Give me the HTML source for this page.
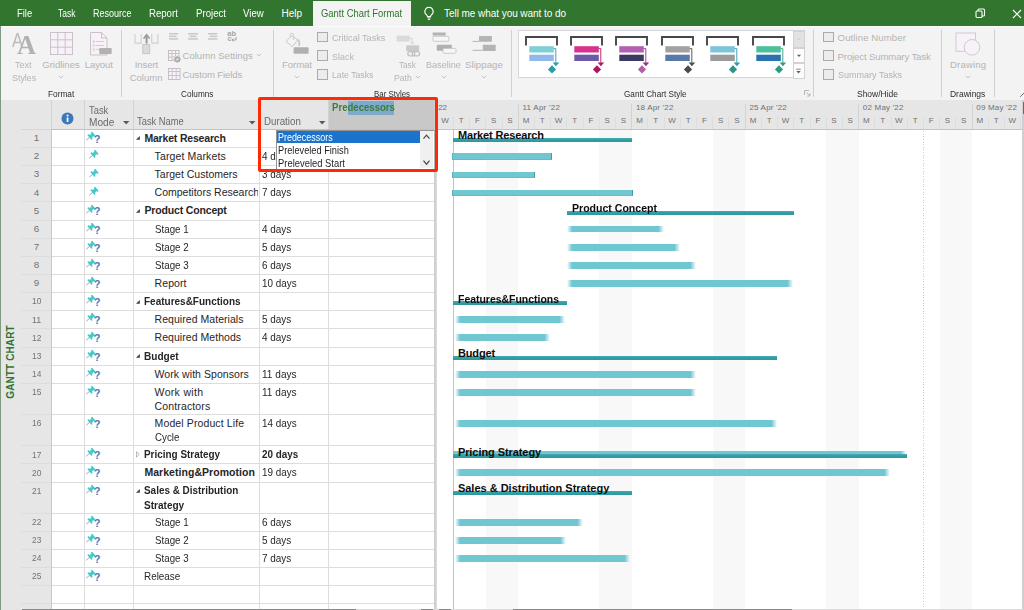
<!DOCTYPE html>
<html><head><meta charset="utf-8"><title>Gantt Chart</title>
<style>
html,body{margin:0;padding:0;}
body{width:1024px;height:610px;position:relative;overflow:hidden;background:#fff;font-family:"Liberation Sans",sans-serif;}
.t{position:absolute;white-space:nowrap;margin:0;padding:0;}
.b{position:absolute;box-sizing:border-box;overflow:visible;}
</style></head><body>
<div class="b" style="left:0.00px;top:0.00px;width:1024.00px;height:26.00px;background:#31752f;"></div>
<div class="b" style="left:0.00px;top:26.00px;width:1024.00px;height:74.40px;background:#f3f3f3;"></div>
<div class="b" style="left:0.00px;top:26.00px;width:1024.00px;height:1.00px;background:#fbfbfb;"></div>
<div class="b" style="left:0.00px;top:99.60px;width:1024.00px;height:0.80px;background:#e0e0e0;"></div>
<div class="b" style="left:0.00px;top:26.00px;width:1.00px;height:584.00px;background:#7f9a80;"></div>
<div class="t" style="left:16.50px;top:7.54px;font-size:10px;line-height:12px;color:#fff;transform:scaleX(0.9434);transform-origin:0 0;">File</div>
<div class="t" style="left:57.90px;top:7.54px;font-size:10px;line-height:12px;color:#fff;transform:scaleX(0.8511);transform-origin:0 0;">Task</div>
<div class="t" style="left:92.70px;top:7.54px;font-size:10px;line-height:12px;color:#fff;transform:scaleX(0.9020);transform-origin:0 0;">Resource</div>
<div class="t" style="left:149.00px;top:7.54px;font-size:10px;line-height:12px;color:#fff;transform:scaleX(0.9596);transform-origin:0 0;">Report</div>
<div class="t" style="left:195.50px;top:7.54px;font-size:10px;line-height:12px;color:#fff;transform:scaleX(0.9640);transform-origin:0 0;">Project</div>
<div class="t" style="left:243.30px;top:7.54px;font-size:10px;line-height:12px;color:#fff;transform:scaleX(0.9631);transform-origin:0 0;">View</div>
<div class="t" style="left:281.60px;top:7.54px;font-size:10px;line-height:12px;color:#fff;letter-spacing:-0.066px;">Help</div>
<div class="b" style="left:313.30px;top:1.20px;width:97.80px;height:25.30px;background:#f3f3f3;"></div>
<div class="t" style="left:321.00px;top:7.54px;font-size:10px;line-height:12px;color:#31752f;transform:scaleX(0.9427);transform-origin:0 0;">Gantt Chart Format</div>
<div class="t" style="left:444.00px;top:7.54px;font-size:10px;line-height:12px;color:#fff;letter-spacing:-0.052px;">Tell me what you want to do</div>
<svg class="b" style="left:422.00px;top:6.00px" width="14" height="15" viewBox="0 0 14 15"><path d="M7 1.2a4.2 4.2 0 0 0-2.4 7.6c.5.5.8 1 .8 1.7h3.2c0-.7.3-1.2.8-1.7A4.2 4.2 0 0 0 7 1.2z" fill="none" stroke="#fff" stroke-width="1.1"/><path d="M5.4 11.8h3.2M5.8 13.3h2.4" stroke="#fff" stroke-width="1"/></svg>
<svg class="b" style="left:975.00px;top:8.00px" width="11" height="11" viewBox="0 0 11 11"><rect x="1" y="3" width="6" height="6.5" rx="1" fill="none" stroke="#fff" stroke-width="1.1"/><path d="M3 3V2a1 1 0 0 1 1-1h4.5a1 1 0 0 1 1 1v5a1 1 0 0 1-1 1H7" fill="none" stroke="#fff" stroke-width="1.1"/></svg>
<svg class="b" style="left:1012.00px;top:9.00px" width="10" height="10" viewBox="0 0 10 10"><path d="M1 1l8 8M9 1l-8 8" stroke="#fff" stroke-width="1.1"/></svg>
<div class="b" style="left:120.80px;top:29.50px;width:1.00px;height:67.00px;background:#cfcfcf;"></div>
<div class="b" style="left:272.90px;top:29.50px;width:1.00px;height:67.00px;background:#cfcfcf;"></div>
<div class="b" style="left:510.50px;top:29.50px;width:1.00px;height:67.00px;background:#cfcfcf;"></div>
<div class="b" style="left:813.20px;top:29.50px;width:1.00px;height:67.00px;background:#cfcfcf;"></div>
<div class="b" style="left:941.30px;top:29.50px;width:1.00px;height:67.00px;background:#cfcfcf;"></div>
<div class="b" style="left:993.80px;top:29.50px;width:1.00px;height:67.00px;background:#cfcfcf;"></div>
<div class="t" style="left:47.60px;top:88.85px;font-size:8.8px;line-height:11px;color:#2e2e2e;transform:scaleX(0.9437);transform-origin:0 0;">Format</div>
<div class="t" style="left:181.00px;top:88.85px;font-size:8.8px;line-height:11px;color:#2e2e2e;transform:scaleX(0.9331);transform-origin:0 0;">Columns</div>
<div class="t" style="left:374.00px;top:88.85px;font-size:8.8px;line-height:11px;color:#2e2e2e;transform:scaleX(0.8977);transform-origin:0 0;">Bar Styles</div>
<div class="t" style="left:624.40px;top:88.85px;font-size:8.8px;line-height:11px;color:#2e2e2e;transform:scaleX(0.9275);transform-origin:0 0;">Gantt Chart Style</div>
<div class="t" style="left:856.50px;top:88.85px;font-size:8.8px;line-height:11px;color:#2e2e2e;transform:scaleX(0.9635);transform-origin:0 0;">Show/Hide</div>
<div class="t" style="left:950.30px;top:88.85px;font-size:8.8px;line-height:11px;color:#2e2e2e;transform:scaleX(0.9625);transform-origin:0 0;">Drawings</div>
<div class="t" style="left:12.4px;top:30.3px;font-size:20.5px;line-height:20px;color:#bcbcbc;transform:scaleX(0.8);transform-origin:0 0">A</div>
<div class="t" style="left:17px;top:32.5px;font-size:26.5px;line-height:24px;color:#b2b2b2;font-family:'Liberation Serif',serif;font-weight:bold;transform:scaleX(0.99);transform-origin:0 0">A</div>
<div class="t" style="left:15.20px;top:59.07px;font-size:9.6px;line-height:12px;color:#b4b4b4;transform:scaleX(0.9372);transform-origin:0 0;">Text</div>
<div class="t" style="left:12.00px;top:72.27px;font-size:9.6px;line-height:12px;color:#b4b4b4;transform:scaleX(0.9257);transform-origin:0 0;">Styles</div>
<svg class="b" style="left:49.50px;top:32.00px" width="23" height="23" viewBox="0 0 23 23"><rect x="0.5" y="0.5" width="22" height="22" fill="#f8f2f8" stroke="#c9c3c9"/><path d="M7.8 0.5v22M15.2 0.5v22M0.5 7.8h22M0.5 15.2h22" stroke="#c9c3c9" stroke-width="1" fill="none"/></svg>
<div class="t" style="left:42.30px;top:59.07px;font-size:9.6px;line-height:12px;color:#b4b4b4;letter-spacing:-0.053px;">Gridlines</div>
<svg class="b" style="left:58.00px;top:74.70px" width="6" height="4" viewBox="0 0 6 4"><path d="M0.8 0.8L3 3l2.2-2.2" fill="none" stroke="#bdbdbd" stroke-width="0.9"/></svg>
<svg class="b" style="left:89.50px;top:31.50px" width="23" height="24" viewBox="0 0 23 24"><path d="M0.5 0.5h11l5.5 5.5v17h-16.5z" fill="#f8f2f8" stroke="#c9c3c9"/><path d="M11.5 0.5v5.5h5.5" fill="none" stroke="#c9c3c9"/><path d="M6 9.5h8M6 13.5h8M6 17.5h4" stroke="#d4cfd4" stroke-width="1"/><circle cx="3.8" cy="9.5" r="1" fill="#c4bec4"/><circle cx="3.8" cy="13.5" r="1" fill="none" stroke="#c4bec4" stroke-width=".6"/><circle cx="3.8" cy="17.5" r="1" fill="none" stroke="#c4bec4" stroke-width=".6"/><rect x="9.2" y="15.9" width="12.5" height="6.2" rx="0.8" fill="#b2b2b2"/></svg>
<div class="t" style="left:84.80px;top:59.07px;font-size:9.6px;line-height:12px;color:#b4b4b4;letter-spacing:-0.154px;">Layout</div>
<svg class="b" style="left:134.00px;top:33.00px" width="25" height="22" viewBox="0 0 25 22"><path d="M1 0.9v9.2h6.2v-9.2M17.7 0.9v9.2h6.2v-9.2" fill="#f5f1f5" stroke="#cfcfcf" stroke-width="1.1"/><path d="M12.6 10.6V3.5" fill="none" stroke="#999" stroke-width="2"/><path d="M8.9 5.2L12.6 0.6l3.7 4.6-1.2.9-2.5-2.6-2.5 2.6z" fill="#999"/><rect x="8.8" y="11.6" width="6.9" height="9" fill="#dbdbdb" stroke="#c4c4c4" stroke-width="0.9"/></svg>
<div class="t" style="left:134.80px;top:59.47px;font-size:9.6px;line-height:12px;color:#b4b4b4;letter-spacing:-0.135px;">Insert</div>
<div class="t" style="left:129.70px;top:72.27px;font-size:9.6px;line-height:12px;color:#b4b4b4;letter-spacing:-0.047px;">Column</div>
<svg class="b" style="left:169.20px;top:33.40px" width="10" height="8" viewBox="0 0 10 8"><rect x="0" y="0.0" width="9" height="1.5" fill="#c8c8c8"/><rect x="0" y="2.6" width="7.5" height="1.5" fill="#c8c8c8"/><rect x="0" y="5.2" width="9" height="1.5" fill="#c8c8c8"/></svg>
<svg class="b" style="left:188.00px;top:33.40px" width="10" height="8" viewBox="0 0 10 8"><rect x="0" y="0.0" width="10" height="1.5" fill="#c8c8c8"/><rect x="1.5" y="2.6" width="7.0" height="1.5" fill="#c8c8c8"/><rect x="0" y="5.2" width="10" height="1.5" fill="#c8c8c8"/></svg>
<svg class="b" style="left:207.80px;top:33.40px" width="10" height="8" viewBox="0 0 10 8"><rect x="0" y="0.0" width="9.4" height="1.5" fill="#c8c8c8"/><rect x="1.5" y="2.6" width="7.9" height="1.5" fill="#c8c8c8"/><rect x="0" y="5.2" width="9.4" height="1.5" fill="#c8c8c8"/></svg>
<div class="t" style="left:227.20px;top:29.17px;font-size:7.6px;line-height:10px;color:#a6a6a6;font-weight:bold;letter-spacing:-0.034px;">ab</div>
<div class="t" style="left:227.50px;top:34.17px;font-size:7.6px;line-height:10px;color:#a6a6a6;font-weight:bold;">c</div>
<svg class="b" style="left:231.40px;top:37.20px" width="6" height="5" viewBox="0 0 6 5"><path d="M5 0v3H1M2.4 1.6L1 3l1.4 1.4" fill="none" stroke="#a0a0a0" stroke-width="1"/></svg>
<svg class="b" style="left:167.50px;top:49.50px" width="13" height="13" viewBox="0 0 13 13"><rect x="0.5" y="0.5" width="10.5" height="10" fill="#f8f2f8" stroke="#c4c0c4"/><path d="M0.5 3.5h10.5M4 0.5v10M7.5 0.5v10M0.5 7h10.5" stroke="#c4c0c4" stroke-width="0.9" fill="none"/><circle cx="9.3" cy="9.3" r="3.6" fill="#f3f3f3"/><circle cx="9.3" cy="9.3" r="2.3" fill="none" stroke="#aeaeae" stroke-width="1.5"/><path d="M9.3 5.6v7.4M5.6 9.3h7.4M6.7 6.7l5.2 5.2M11.9 6.7l-5.2 5.2" stroke="#aeaeae" stroke-width="1"/><circle cx="9.3" cy="9.3" r="0.9" fill="#f3f3f3"/></svg>
<div class="t" style="left:182.50px;top:49.97px;font-size:9.6px;line-height:12px;color:#b4b4b4;letter-spacing:-0.009px;">Column Settings</div>
<svg class="b" style="left:255.80px;top:53.20px" width="6" height="4" viewBox="0 0 6 4"><path d="M0.8 0.8L3 3l2.2-2.2" fill="none" stroke="#bdbdbd" stroke-width="0.9"/></svg>
<svg class="b" style="left:167.50px;top:67.80px" width="13" height="12" viewBox="0 0 13 12"><rect x="0.5" y="0.5" width="11.5" height="11" fill="#f8f2f8" stroke="#c4c0c4"/><path d="M0.5 3.5h11.5M4.2 0.5v11M8.2 0.5v11M0.5 7.5h11.5" stroke="#c4c0c4" stroke-width="0.9" fill="none"/></svg>
<div class="t" style="left:182.50px;top:69.47px;font-size:9.6px;line-height:12px;color:#b4b4b4;letter-spacing:-0.127px;">Custom Fields</div>
<svg class="b" style="left:285.00px;top:32.00px" width="24" height="23" viewBox="0 0 24 23"><path d="M6.8 3.9L12.8 7.8 7.3 14.6 1 9.4z" fill="#f6f4f6" stroke="#c9c9c9" stroke-width="1"/><path d="M5.2 5V2.9a1.7 1.7 0 0 1 3.4 0V6.4" fill="none" stroke="#c9c9c9" stroke-width="0.9"/><circle cx="8.4" cy="7" r="0.7" fill="#bdbdbd"/><path d="M13 7.4c1.4 1.6 1.7 3.9 1.2 6.4" stroke="#c6c6c6" stroke-width="1.5" fill="none"/><rect x="8.6" y="15.3" width="15" height="6.4" rx="0.8" fill="#b0b0b0"/></svg>
<div class="t" style="left:282.00px;top:59.37px;font-size:9.6px;line-height:12px;color:#b4b4b4;letter-spacing:-0.084px;">Format</div>
<svg class="b" style="left:294.30px;top:74.70px" width="6" height="4" viewBox="0 0 6 4"><path d="M0.8 0.8L3 3l2.2-2.2" fill="none" stroke="#bdbdbd" stroke-width="0.9"/></svg>
<div class="b" style="left:317.00px;top:31.60px;width:10.60px;height:10.60px;background:#ececec;border:1px solid #ababab;"></div>
<div class="t" style="left:331.60px;top:31.87px;font-size:9.6px;line-height:12px;color:#b4b4b4;transform:scaleX(0.9456);transform-origin:0 0;">Critical Tasks</div>
<div class="b" style="left:317.00px;top:50.30px;width:10.60px;height:10.60px;background:#ececec;border:1px solid #ababab;"></div>
<div class="t" style="left:331.60px;top:50.57px;font-size:9.6px;line-height:12px;color:#b4b4b4;transform:scaleX(0.9329);transform-origin:0 0;">Slack</div>
<div class="b" style="left:317.00px;top:69.30px;width:10.60px;height:10.60px;background:#ececec;border:1px solid #ababab;"></div>
<div class="t" style="left:331.60px;top:69.37px;font-size:9.6px;line-height:12px;color:#b4b4b4;transform:scaleX(0.9056);transform-origin:0 0;">Late Tasks</div>
<svg class="b" style="left:396.00px;top:34.50px" width="26" height="23" viewBox="0 0 26 23"><rect x="0.6" y="0.7" width="13" height="5.8" fill="#dadada"/><path d="M13.6 3.5h2.6v5" fill="none" stroke="#d0d0d0" stroke-width="0.9"/><path d="M14.6 7.4l1.6 1.8 1.6-1.8" fill="none" stroke="#d0d0d0" stroke-width="0.9"/><rect x="10.2" y="10.3" width="13" height="5.9" fill="#cacaca"/><rect x="11.8" y="16.6" width="7" height="4.2" rx="2.1" fill="none" stroke="#c0c0c0" stroke-width="1.3"/><rect x="16.2" y="16.6" width="7.4" height="4.2" rx="2.1" fill="none" stroke="#c0c0c0" stroke-width="1.3"/></svg>
<div class="t" style="left:399.40px;top:59.07px;font-size:9.6px;line-height:12px;color:#b4b4b4;transform:scaleX(0.8511);transform-origin:0 0;">Task</div>
<div class="t" style="left:394.30px;top:72.27px;font-size:9.6px;line-height:12px;color:#b4b4b4;transform:scaleX(0.8963);transform-origin:0 0;">Path</div>
<svg class="b" style="left:415.20px;top:75.20px" width="6" height="4" viewBox="0 0 6 4"><path d="M0.8 0.8L3 3l2.2-2.2" fill="none" stroke="#bdbdbd" stroke-width="0.9"/></svg>
<svg class="b" style="left:431.50px;top:32.00px" width="25" height="22" viewBox="0 0 25 22"><rect x="0.7" y="0.5" width="13" height="3.1" fill="#b4b4b4"/><rect x="0.9" y="4.3" width="16" height="5" rx="1" fill="#f8f4f8" stroke="#c6c6c6" stroke-width="0.9"/><rect x="4.8" y="12.8" width="15" height="5.9" rx="0.6" fill="#b0b0b0"/><rect x="11" y="16.4" width="13" height="4.9" rx="1" fill="#f8f4f8" stroke="#c6c6c6" stroke-width="0.9"/></svg>
<div class="t" style="left:426.00px;top:59.07px;font-size:9.6px;line-height:12px;color:#b4b4b4;transform:scaleX(0.9477);transform-origin:0 0;">Baseline</div>
<svg class="b" style="left:440.80px;top:74.70px" width="6" height="4" viewBox="0 0 6 4"><path d="M0.8 0.8L3 3l2.2-2.2" fill="none" stroke="#bdbdbd" stroke-width="0.9"/></svg>
<svg class="b" style="left:472.00px;top:35.00px" width="25" height="17" viewBox="0 0 25 17"><rect x="7" y="1" width="12.9" height="5.8" rx="0.5" fill="#b4b4b4"/><rect x="0.5" y="5.9" width="6.4" height="1" fill="#b4b4b4"/><rect x="10.8" y="9.8" width="12.9" height="6.1" rx="0.5" fill="#b4b4b4"/><rect x="0.5" y="14.8" width="10" height="1" fill="#b4b4b4"/></svg>
<div class="t" style="left:465.00px;top:59.07px;font-size:9.6px;line-height:12px;color:#b4b4b4;letter-spacing:0.067px;">Slippage</div>
<svg class="b" style="left:481.10px;top:74.70px" width="6" height="4" viewBox="0 0 6 4"><path d="M0.8 0.8L3 3l2.2-2.2" fill="none" stroke="#bdbdbd" stroke-width="0.9"/></svg>
<div class="b" style="left:518.20px;top:30.30px;width:286.80px;height:48.20px;background:#ffffff;border:1px solid #d6d6d6;"></div>
<svg class="b" style="left:524.60px;top:35.60px" width="36" height="40" viewBox="0 0 36 40"><path d="M1 9.6V1h31v8.6" fill="none" stroke="#474747" stroke-width="1.9"/><rect x="4.3" y="10.2" width="24.5" height="6.3" fill="#7fd0d6"/><rect x="4.3" y="18.7" width="24.5" height="6.3" fill="#8fb9ea"/><path d="M28.8 12.6h2v14.2" fill="none" stroke="#2a9ca8" stroke-width="0.9"/><path d="M27.6 26.4h6.6l-3.3 3.9z" fill="#2a9ca8"/><path d="M27 29.3l4.1 4.1-4.1 4.1-4.1-4.1z" fill="#2a9ca8"/></svg>
<svg class="b" style="left:570.02px;top:35.60px" width="36" height="40" viewBox="0 0 36 40"><path d="M1 9.6V1h31v8.6" fill="none" stroke="#474747" stroke-width="1.9"/><rect x="4.3" y="10.2" width="24.5" height="6.3" fill="#d8338c"/><rect x="4.3" y="18.7" width="24.5" height="6.3" fill="#6b5aa6"/><path d="M28.8 12.6h2v14.2" fill="none" stroke="#b3125e" stroke-width="0.9"/><path d="M27.6 26.4h6.6l-3.3 3.9z" fill="#b3125e"/><path d="M27 29.3l4.1 4.1-4.1 4.1-4.1-4.1z" fill="#b3125e"/></svg>
<svg class="b" style="left:615.44px;top:35.60px" width="36" height="40" viewBox="0 0 36 40"><path d="M1 9.6V1h31v8.6" fill="none" stroke="#474747" stroke-width="1.9"/><rect x="4.3" y="10.2" width="24.5" height="6.3" fill="#b35fb1"/><rect x="4.3" y="18.7" width="24.5" height="6.3" fill="#3c3a62"/><path d="M28.8 12.6h2v14.2" fill="none" stroke="#9c2a8c" stroke-width="0.9"/><path d="M27.6 26.4h6.6l-3.3 3.9z" fill="#9c2a8c"/><path d="M27 29.3l4.1 4.1-4.1 4.1-4.1-4.1z" fill="#b35fa9"/></svg>
<svg class="b" style="left:660.86px;top:35.60px" width="36" height="40" viewBox="0 0 36 40"><path d="M1 9.6V1h31v8.6" fill="none" stroke="#474747" stroke-width="1.9"/><rect x="4.3" y="10.2" width="24.5" height="6.3" fill="#a2a2a2"/><rect x="4.3" y="18.7" width="24.5" height="6.3" fill="#5a79a9"/><path d="M28.8 12.6h2v14.2" fill="none" stroke="#4a4a4a" stroke-width="0.9"/><path d="M27.6 26.4h6.6l-3.3 3.9z" fill="#4a4a4a"/><path d="M27 29.3l4.1 4.1-4.1 4.1-4.1-4.1z" fill="#4a4a4a"/></svg>
<svg class="b" style="left:706.28px;top:35.60px" width="36" height="40" viewBox="0 0 36 40"><path d="M1 9.6V1h31v8.6" fill="none" stroke="#474747" stroke-width="1.9"/><rect x="4.3" y="10.2" width="24.5" height="6.3" fill="#7cc5d9"/><rect x="4.3" y="18.7" width="24.5" height="6.3" fill="#9b9b9b"/><path d="M28.8 12.6h2v14.2" fill="none" stroke="#2a99b2" stroke-width="0.9"/><path d="M27.6 26.4h6.6l-3.3 3.9z" fill="#2a99b2"/><path d="M27 29.3l4.1 4.1-4.1 4.1-4.1-4.1z" fill="#2e9384"/></svg>
<svg class="b" style="left:751.70px;top:35.60px" width="36" height="40" viewBox="0 0 36 40"><path d="M1 9.6V1h31v8.6" fill="none" stroke="#474747" stroke-width="1.9"/><rect x="4.3" y="10.2" width="24.5" height="6.3" fill="#4cc09a"/><rect x="4.3" y="18.7" width="24.5" height="6.3" fill="#2a71b1"/><path d="M28.8 12.6h2v14.2" fill="none" stroke="#2a9a82" stroke-width="0.9"/><path d="M27.6 26.4h6.6l-3.3 3.9z" fill="#2a9a82"/><path d="M27 29.3l4.1 4.1-4.1 4.1-4.1-4.1z" fill="#2e9a82"/></svg>
<div class="b" style="left:793.00px;top:30.50px;width:12.00px;height:17.40px;background:#e2e2e2;border:1px solid #d2d2d2;"></div>
<div class="b" style="left:793.00px;top:47.80px;width:12.00px;height:15.30px;background:#fdfdfd;border:1px solid #d2d2d2;"></div>
<div class="b" style="left:793.00px;top:63.00px;width:12.00px;height:15.50px;background:#fdfdfd;border:1px solid #d2d2d2;"></div>
<svg class="b" style="left:795.90px;top:37.30px" width="6" height="4" viewBox="0 0 6 4"><path d="M1.2 2.8L3 1l1.8 1.8z" fill="#cccccc"/></svg>
<svg class="b" style="left:795.90px;top:53.80px" width="6" height="4" viewBox="0 0 6 4"><path d="M1 0.8h4L3 3z" fill="#5e5e5e"/></svg>
<svg class="b" style="left:795.40px;top:67.60px" width="7" height="7" viewBox="0 0 7 7"><path d="M1.2 1.2h4.6" stroke="#777" stroke-width="0.9"/><path d="M1.3 3h4.4L3.5 5.4z" fill="#5e5e5e"/></svg>
<svg class="b" style="left:804.20px;top:90.20px" width="7" height="7" viewBox="0 0 7 7"><path d="M0.5 5V0.5H5" fill="none" stroke="#b0b0b0" stroke-width="0.9"/><path d="M2.5 2.5L6 6M6 3.2V6H3.2" fill="none" stroke="#b0b0b0" stroke-width="0.9"/></svg>
<div class="b" style="left:823.00px;top:31.60px;width:10.80px;height:10.80px;background:#ececec;border:1px solid #ababab;"></div>
<div class="t" style="left:837.60px;top:31.87px;font-size:9.6px;line-height:12px;color:#b4b4b4;letter-spacing:0.084px;">Outline Number</div>
<div class="b" style="left:823.00px;top:50.20px;width:10.80px;height:10.80px;background:#ececec;border:1px solid #ababab;"></div>
<div class="t" style="left:837.60px;top:50.57px;font-size:9.6px;line-height:12px;color:#b4b4b4;letter-spacing:-0.142px;">Project Summary Task</div>
<div class="b" style="left:823.00px;top:69.20px;width:10.80px;height:10.80px;background:#ececec;border:1px solid #ababab;"></div>
<div class="t" style="left:837.60px;top:69.37px;font-size:9.6px;line-height:12px;color:#b4b4b4;transform:scaleX(0.9412);transform-origin:0 0;">Summary Tasks</div>
<svg class="b" style="left:955.00px;top:31.50px" width="27" height="25" viewBox="0 0 27 25"><rect x="1" y="1" width="19.5" height="18.3" fill="#f7f2f7" stroke="#cfcacf" stroke-width="1"/><circle cx="17" cy="15.3" r="7.8" fill="#f7f2f7" stroke="#cfcacf" stroke-width="1"/></svg>
<div class="t" style="left:950.00px;top:59.37px;font-size:9.6px;line-height:12px;color:#b4b4b4;letter-spacing:0.170px;">Drawing</div>
<svg class="b" style="left:965.00px;top:74.70px" width="6" height="4" viewBox="0 0 6 4"><path d="M0.8 0.8L3 3l2.2-2.2" fill="none" stroke="#bdbdbd" stroke-width="0.9"/></svg>
<svg class="b" style="left:1019.00px;top:91.00px" width="5" height="7" viewBox="0 0 5 7"><path d="M1.2 5.9L5.4 1.6" fill="none" stroke="#6e6e6e" stroke-width="1"/></svg>
<div class="b" style="left:1.00px;top:100.30px;width:50.30px;height:510.00px;background:#e6e6e6;"></div>
<div class="t" style="left:10.9px;top:361.7px;font-size:10px;line-height:12px;font-weight:bold;color:#31752f;letter-spacing:0.1px;transform:translate(-50%,-50%) rotate(-90deg);">GANTT CHART</div>
<div class="b" style="left:1.00px;top:100.30px;width:433.50px;height:29.00px;background:#e6e6e6;"></div>
<div class="b" style="left:328.60px;top:100.30px;width:106.00px;height:29.00px;background:#c8c8c8;"></div>
<div class="b" style="left:51.30px;top:129.30px;width:383.20px;height:480.70px;background:#fff;"></div>
<div class="b" style="left:20.50px;top:146.95px;width:414.00px;height:1.00px;background:#dddddd;"></div>
<div class="b" style="left:20.50px;top:165.10px;width:414.00px;height:1.00px;background:#dddddd;"></div>
<div class="b" style="left:20.50px;top:183.25px;width:414.00px;height:1.00px;background:#dddddd;"></div>
<div class="b" style="left:20.50px;top:201.40px;width:414.00px;height:1.00px;background:#dddddd;"></div>
<div class="b" style="left:20.50px;top:219.55px;width:414.00px;height:1.00px;background:#dddddd;"></div>
<div class="b" style="left:20.50px;top:237.70px;width:414.00px;height:1.00px;background:#dddddd;"></div>
<div class="b" style="left:20.50px;top:255.85px;width:414.00px;height:1.00px;background:#dddddd;"></div>
<div class="b" style="left:20.50px;top:274.00px;width:414.00px;height:1.00px;background:#dddddd;"></div>
<div class="b" style="left:20.50px;top:292.15px;width:414.00px;height:1.00px;background:#dddddd;"></div>
<div class="b" style="left:20.50px;top:310.30px;width:414.00px;height:1.00px;background:#dddddd;"></div>
<div class="b" style="left:20.50px;top:328.45px;width:414.00px;height:1.00px;background:#dddddd;"></div>
<div class="b" style="left:20.50px;top:346.60px;width:414.00px;height:1.00px;background:#dddddd;"></div>
<div class="b" style="left:20.50px;top:364.75px;width:414.00px;height:1.00px;background:#dddddd;"></div>
<div class="b" style="left:20.50px;top:382.90px;width:414.00px;height:1.00px;background:#dddddd;"></div>
<div class="b" style="left:20.50px;top:413.80px;width:414.00px;height:1.00px;background:#dddddd;"></div>
<div class="b" style="left:20.50px;top:445.20px;width:414.00px;height:1.00px;background:#dddddd;"></div>
<div class="b" style="left:20.50px;top:463.35px;width:414.00px;height:1.00px;background:#dddddd;"></div>
<div class="b" style="left:20.50px;top:481.50px;width:414.00px;height:1.00px;background:#dddddd;"></div>
<div class="b" style="left:20.50px;top:512.70px;width:414.00px;height:1.00px;background:#dddddd;"></div>
<div class="b" style="left:20.50px;top:530.85px;width:414.00px;height:1.00px;background:#dddddd;"></div>
<div class="b" style="left:20.50px;top:549.00px;width:414.00px;height:1.00px;background:#dddddd;"></div>
<div class="b" style="left:20.50px;top:567.15px;width:414.00px;height:1.00px;background:#dddddd;"></div>
<div class="b" style="left:20.50px;top:585.30px;width:414.00px;height:1.00px;background:#dddddd;"></div>
<div class="b" style="left:20.50px;top:603.45px;width:414.00px;height:1.00px;background:#dddddd;"></div>
<div class="b" style="left:83.90px;top:129.30px;width:1.00px;height:481.00px;background:#dddddd;"></div>
<div class="b" style="left:132.70px;top:129.30px;width:1.00px;height:481.00px;background:#dddddd;"></div>
<div class="b" style="left:258.70px;top:129.30px;width:1.00px;height:481.00px;background:#dddddd;"></div>
<div class="b" style="left:327.90px;top:129.30px;width:1.00px;height:481.00px;background:#dddddd;"></div>
<div class="b" style="left:50.80px;top:129.30px;width:1.00px;height:481.00px;background:#c9c9c9;"></div>
<div class="b" style="left:50.80px;top:100.30px;width:1.00px;height:29.00px;background:#d2d2d2;"></div>
<div class="b" style="left:83.90px;top:100.30px;width:1.00px;height:29.00px;background:#d2d2d2;"></div>
<div class="b" style="left:132.70px;top:100.30px;width:1.00px;height:29.00px;background:#d2d2d2;"></div>
<div class="b" style="left:258.70px;top:100.30px;width:1.00px;height:29.00px;background:#d2d2d2;"></div>
<div class="b" style="left:327.90px;top:100.30px;width:1.00px;height:29.00px;background:#d2d2d2;"></div>
<div class="b" style="left:20.50px;top:128.80px;width:30.50px;height:1.00px;background:#d6d6d6;"></div>
<div class="b" style="left:51.00px;top:128.80px;width:383.50px;height:1.00px;background:#c2c2c2;"></div>
<div class="t" style="left:88.70px;top:104.16px;font-size:10.5px;line-height:13px;color:#6a6a6a;transform:scaleX(0.8940);transform-origin:0 0;">Task</div>
<div class="t" style="left:88.70px;top:116.46px;font-size:10.5px;line-height:13px;color:#6a6a6a;transform:scaleX(0.9633);transform-origin:0 0;">Mode</div>
<div class="t" style="left:137.00px;top:114.86px;font-size:10.5px;line-height:13px;color:#6a6a6a;transform:scaleX(0.8912);transform-origin:0 0;">Task Name</div>
<div class="t" style="left:263.70px;top:114.86px;font-size:10.5px;line-height:13px;color:#6a6a6a;transform:scaleX(0.9273);transform-origin:0 0;">Duration</div>
<svg class="b" style="left:122.80px;top:120.80px" width="6.4" height="3.6" viewBox="0 0 6.4 3.6"><path d="M0 0h6.4L3.2 3.6z" fill="#5a5a5a"/></svg>
<svg class="b" style="left:248.80px;top:120.80px" width="6.4" height="3.6" viewBox="0 0 6.4 3.6"><path d="M0 0h6.4L3.2 3.6z" fill="#5a5a5a"/></svg>
<svg class="b" style="left:318.50px;top:120.80px" width="6.4" height="3.6" viewBox="0 0 6.4 3.6"><path d="M0 0h6.4L3.2 3.6z" fill="#5a5a5a"/></svg>
<svg class="b" style="left:61.30px;top:111.60px" width="13" height="13" viewBox="0 0 13 13"><circle cx="6.5" cy="6.5" r="6" fill="#3d77b8"/><rect x="5.7" y="5.4" width="1.7" height="4.6" fill="#fff"/><circle cx="6.55" cy="3.5" r="1.05" fill="#fff"/></svg>
<div class="t" style="left:33.67px;top:132.10px;font-size:9.8px;line-height:12px;color:#727272;">1</div>
<svg class="b" style="left:82.30px;top:128.90px" width="16" height="16" viewBox="-8 -8 16 16"><g transform="rotate(50) scale(0.9)"><path d="M0 0.4V5.4" stroke="#9a9ea2" stroke-width="0.95" fill="none"/><path d="M-2.5 -5.6h5a.6 .6 0 0 1 .6 .6v.8a.6 .6 0 0 1-.6 .6h-.8l.5 2.6h.7a.7 .7 0 0 1 .7 .7v.6a.6 .6 0 0 1-.6 .6h-6a.6 .6 0 0 1-.6-.6v-.6a.7 .7 0 0 1 .7-.7h.7l.5-2.6h-.8a.6 .6 0 0 1-.6-.6v-.8a.6 .6 0 0 1 .6-.6z" fill="#45c9ca"/></g></svg>
<div class="t" style="left:94.00px;top:132.76px;font-size:10.5px;line-height:13px;color:#4a79b6;font-weight:bold;">?</div>
<div class="t" style="left:144.40px;top:131.76px;font-size:10.5px;line-height:13px;color:#262626;font-weight:bold;letter-spacing:-0.183px;">Market Research</div>
<svg class="b" style="left:135.70px;top:136.20px" width="4" height="4" viewBox="0 0 4 4"><path d="M3.8 0v3.8H0z" fill="#3c3c3c"/></svg>
<div class="t" style="left:33.67px;top:150.25px;font-size:9.8px;line-height:12px;color:#727272;">2</div>
<svg class="b" style="left:84.80px;top:147.35px" width="16" height="16" viewBox="-8 -8 16 16"><g transform="rotate(50) scale(0.9)"><path d="M0 0.4V5.4" stroke="#9a9ea2" stroke-width="0.95" fill="none"/><path d="M-2.5 -5.6h5a.6 .6 0 0 1 .6 .6v.8a.6 .6 0 0 1-.6 .6h-.8l.5 2.6h.7a.7 .7 0 0 1 .7 .7v.6a.6 .6 0 0 1-.6 .6h-6a.6 .6 0 0 1-.6-.6v-.6a.7 .7 0 0 1 .7-.7h.7l.5-2.6h-.8a.6 .6 0 0 1-.6-.6v-.8a.6 .6 0 0 1 .6-.6z" fill="#45c9ca"/></g></svg>
<div class="t" style="left:154.60px;top:149.91px;font-size:10.5px;line-height:13px;color:#262626;letter-spacing:0.126px;">Target Markets</div>
<div class="t" style="left:261.80px;top:149.91px;font-size:10.5px;line-height:13px;color:#262626;transform:scaleX(0.9472);transform-origin:0 0;">4 days</div>
<div class="t" style="left:33.67px;top:168.40px;font-size:9.8px;line-height:12px;color:#727272;">3</div>
<svg class="b" style="left:84.80px;top:165.50px" width="16" height="16" viewBox="-8 -8 16 16"><g transform="rotate(50) scale(0.9)"><path d="M0 0.4V5.4" stroke="#9a9ea2" stroke-width="0.95" fill="none"/><path d="M-2.5 -5.6h5a.6 .6 0 0 1 .6 .6v.8a.6 .6 0 0 1-.6 .6h-.8l.5 2.6h.7a.7 .7 0 0 1 .7 .7v.6a.6 .6 0 0 1-.6 .6h-6a.6 .6 0 0 1-.6-.6v-.6a.7 .7 0 0 1 .7-.7h.7l.5-2.6h-.8a.6 .6 0 0 1-.6-.6v-.8a.6 .6 0 0 1 .6-.6z" fill="#45c9ca"/></g></svg>
<div class="t" style="left:154.60px;top:168.06px;font-size:10.5px;line-height:13px;color:#262626;letter-spacing:0.009px;">Target Customers</div>
<div class="t" style="left:261.80px;top:168.06px;font-size:10.5px;line-height:13px;color:#262626;transform:scaleX(0.9472);transform-origin:0 0;">3 days</div>
<div class="t" style="left:33.67px;top:186.55px;font-size:9.8px;line-height:12px;color:#727272;">4</div>
<svg class="b" style="left:84.80px;top:183.65px" width="16" height="16" viewBox="-8 -8 16 16"><g transform="rotate(50) scale(0.9)"><path d="M0 0.4V5.4" stroke="#9a9ea2" stroke-width="0.95" fill="none"/><path d="M-2.5 -5.6h5a.6 .6 0 0 1 .6 .6v.8a.6 .6 0 0 1-.6 .6h-.8l.5 2.6h.7a.7 .7 0 0 1 .7 .7v.6a.6 .6 0 0 1-.6 .6h-6a.6 .6 0 0 1-.6-.6v-.6a.7 .7 0 0 1 .7-.7h.7l.5-2.6h-.8a.6 .6 0 0 1-.6-.6v-.8a.6 .6 0 0 1 .6-.6z" fill="#45c9ca"/></g></svg>
<div class="t" style="left:154.60px;top:186.21px;font-size:10.5px;line-height:13px;color:#262626;width:103.8px;overflow:hidden;">Competitors Research</div>
<div class="t" style="left:261.80px;top:186.21px;font-size:10.5px;line-height:13px;color:#262626;transform:scaleX(0.9472);transform-origin:0 0;">7 days</div>
<div class="t" style="left:33.67px;top:204.70px;font-size:9.8px;line-height:12px;color:#727272;">5</div>
<svg class="b" style="left:82.30px;top:201.50px" width="16" height="16" viewBox="-8 -8 16 16"><g transform="rotate(50) scale(0.9)"><path d="M0 0.4V5.4" stroke="#9a9ea2" stroke-width="0.95" fill="none"/><path d="M-2.5 -5.6h5a.6 .6 0 0 1 .6 .6v.8a.6 .6 0 0 1-.6 .6h-.8l.5 2.6h.7a.7 .7 0 0 1 .7 .7v.6a.6 .6 0 0 1-.6 .6h-6a.6 .6 0 0 1-.6-.6v-.6a.7 .7 0 0 1 .7-.7h.7l.5-2.6h-.8a.6 .6 0 0 1-.6-.6v-.8a.6 .6 0 0 1 .6-.6z" fill="#45c9ca"/></g></svg>
<div class="t" style="left:94.00px;top:205.36px;font-size:10.5px;line-height:13px;color:#4a79b6;font-weight:bold;">?</div>
<div class="t" style="left:144.40px;top:204.36px;font-size:10.5px;line-height:13px;color:#262626;font-weight:bold;letter-spacing:-0.152px;">Product Concept</div>
<svg class="b" style="left:135.70px;top:208.80px" width="4" height="4" viewBox="0 0 4 4"><path d="M3.8 0v3.8H0z" fill="#3c3c3c"/></svg>
<div class="t" style="left:33.67px;top:222.85px;font-size:9.8px;line-height:12px;color:#727272;">6</div>
<svg class="b" style="left:82.30px;top:219.65px" width="16" height="16" viewBox="-8 -8 16 16"><g transform="rotate(50) scale(0.9)"><path d="M0 0.4V5.4" stroke="#9a9ea2" stroke-width="0.95" fill="none"/><path d="M-2.5 -5.6h5a.6 .6 0 0 1 .6 .6v.8a.6 .6 0 0 1-.6 .6h-.8l.5 2.6h.7a.7 .7 0 0 1 .7 .7v.6a.6 .6 0 0 1-.6 .6h-6a.6 .6 0 0 1-.6-.6v-.6a.7 .7 0 0 1 .7-.7h.7l.5-2.6h-.8a.6 .6 0 0 1-.6-.6v-.8a.6 .6 0 0 1 .6-.6z" fill="#45c9ca"/></g></svg>
<div class="t" style="left:94.00px;top:223.51px;font-size:10.5px;line-height:13px;color:#4a79b6;font-weight:bold;">?</div>
<div class="t" style="left:154.60px;top:222.51px;font-size:10.5px;line-height:13px;color:#262626;transform:scaleX(0.9283);transform-origin:0 0;">Stage 1</div>
<div class="t" style="left:261.80px;top:222.51px;font-size:10.5px;line-height:13px;color:#262626;transform:scaleX(0.9472);transform-origin:0 0;">4 days</div>
<div class="t" style="left:33.67px;top:241.00px;font-size:9.8px;line-height:12px;color:#727272;">7</div>
<svg class="b" style="left:82.30px;top:237.80px" width="16" height="16" viewBox="-8 -8 16 16"><g transform="rotate(50) scale(0.9)"><path d="M0 0.4V5.4" stroke="#9a9ea2" stroke-width="0.95" fill="none"/><path d="M-2.5 -5.6h5a.6 .6 0 0 1 .6 .6v.8a.6 .6 0 0 1-.6 .6h-.8l.5 2.6h.7a.7 .7 0 0 1 .7 .7v.6a.6 .6 0 0 1-.6 .6h-6a.6 .6 0 0 1-.6-.6v-.6a.7 .7 0 0 1 .7-.7h.7l.5-2.6h-.8a.6 .6 0 0 1-.6-.6v-.8a.6 .6 0 0 1 .6-.6z" fill="#45c9ca"/></g></svg>
<div class="t" style="left:94.00px;top:241.66px;font-size:10.5px;line-height:13px;color:#4a79b6;font-weight:bold;">?</div>
<div class="t" style="left:154.60px;top:240.66px;font-size:10.5px;line-height:13px;color:#262626;transform:scaleX(0.9283);transform-origin:0 0;">Stage 2</div>
<div class="t" style="left:261.80px;top:240.66px;font-size:10.5px;line-height:13px;color:#262626;transform:scaleX(0.9472);transform-origin:0 0;">5 days</div>
<div class="t" style="left:33.67px;top:259.15px;font-size:9.8px;line-height:12px;color:#727272;">8</div>
<svg class="b" style="left:82.30px;top:255.95px" width="16" height="16" viewBox="-8 -8 16 16"><g transform="rotate(50) scale(0.9)"><path d="M0 0.4V5.4" stroke="#9a9ea2" stroke-width="0.95" fill="none"/><path d="M-2.5 -5.6h5a.6 .6 0 0 1 .6 .6v.8a.6 .6 0 0 1-.6 .6h-.8l.5 2.6h.7a.7 .7 0 0 1 .7 .7v.6a.6 .6 0 0 1-.6 .6h-6a.6 .6 0 0 1-.6-.6v-.6a.7 .7 0 0 1 .7-.7h.7l.5-2.6h-.8a.6 .6 0 0 1-.6-.6v-.8a.6 .6 0 0 1 .6-.6z" fill="#45c9ca"/></g></svg>
<div class="t" style="left:94.00px;top:259.81px;font-size:10.5px;line-height:13px;color:#4a79b6;font-weight:bold;">?</div>
<div class="t" style="left:154.60px;top:258.81px;font-size:10.5px;line-height:13px;color:#262626;transform:scaleX(0.9283);transform-origin:0 0;">Stage 3</div>
<div class="t" style="left:261.80px;top:258.81px;font-size:10.5px;line-height:13px;color:#262626;transform:scaleX(0.9472);transform-origin:0 0;">6 days</div>
<div class="t" style="left:33.67px;top:277.30px;font-size:9.8px;line-height:12px;color:#727272;">9</div>
<svg class="b" style="left:82.30px;top:274.10px" width="16" height="16" viewBox="-8 -8 16 16"><g transform="rotate(50) scale(0.9)"><path d="M0 0.4V5.4" stroke="#9a9ea2" stroke-width="0.95" fill="none"/><path d="M-2.5 -5.6h5a.6 .6 0 0 1 .6 .6v.8a.6 .6 0 0 1-.6 .6h-.8l.5 2.6h.7a.7 .7 0 0 1 .7 .7v.6a.6 .6 0 0 1-.6 .6h-6a.6 .6 0 0 1-.6-.6v-.6a.7 .7 0 0 1 .7-.7h.7l.5-2.6h-.8a.6 .6 0 0 1-.6-.6v-.8a.6 .6 0 0 1 .6-.6z" fill="#45c9ca"/></g></svg>
<div class="t" style="left:94.00px;top:277.96px;font-size:10.5px;line-height:13px;color:#4a79b6;font-weight:bold;">?</div>
<div class="t" style="left:154.60px;top:276.96px;font-size:10.5px;line-height:13px;color:#262626;letter-spacing:0.064px;">Report</div>
<div class="t" style="left:261.80px;top:276.96px;font-size:10.5px;line-height:13px;color:#262626;transform:scaleX(0.9409);transform-origin:0 0;">10 days</div>
<div class="t" style="left:31.75px;top:295.45px;font-size:9.8px;line-height:12px;color:#727272;transform:scaleX(0.8532);transform-origin:0 0;">10</div>
<svg class="b" style="left:82.30px;top:292.25px" width="16" height="16" viewBox="-8 -8 16 16"><g transform="rotate(50) scale(0.9)"><path d="M0 0.4V5.4" stroke="#9a9ea2" stroke-width="0.95" fill="none"/><path d="M-2.5 -5.6h5a.6 .6 0 0 1 .6 .6v.8a.6 .6 0 0 1-.6 .6h-.8l.5 2.6h.7a.7 .7 0 0 1 .7 .7v.6a.6 .6 0 0 1-.6 .6h-6a.6 .6 0 0 1-.6-.6v-.6a.7 .7 0 0 1 .7-.7h.7l.5-2.6h-.8a.6 .6 0 0 1-.6-.6v-.8a.6 .6 0 0 1 .6-.6z" fill="#45c9ca"/></g></svg>
<div class="t" style="left:94.00px;top:296.11px;font-size:10.5px;line-height:13px;color:#4a79b6;font-weight:bold;">?</div>
<div class="t" style="left:144.40px;top:295.11px;font-size:10.5px;line-height:13px;color:#262626;font-weight:bold;transform:scaleX(0.9516);transform-origin:0 0;">Features&amp;Functions</div>
<svg class="b" style="left:135.70px;top:299.55px" width="4" height="4" viewBox="0 0 4 4"><path d="M3.8 0v3.8H0z" fill="#3c3c3c"/></svg>
<div class="t" style="left:31.75px;top:313.60px;font-size:9.8px;line-height:12px;color:#727272;transform:scaleX(0.9141);transform-origin:0 0;">11</div>
<svg class="b" style="left:82.30px;top:310.40px" width="16" height="16" viewBox="-8 -8 16 16"><g transform="rotate(50) scale(0.9)"><path d="M0 0.4V5.4" stroke="#9a9ea2" stroke-width="0.95" fill="none"/><path d="M-2.5 -5.6h5a.6 .6 0 0 1 .6 .6v.8a.6 .6 0 0 1-.6 .6h-.8l.5 2.6h.7a.7 .7 0 0 1 .7 .7v.6a.6 .6 0 0 1-.6 .6h-6a.6 .6 0 0 1-.6-.6v-.6a.7 .7 0 0 1 .7-.7h.7l.5-2.6h-.8a.6 .6 0 0 1-.6-.6v-.8a.6 .6 0 0 1 .6-.6z" fill="#45c9ca"/></g></svg>
<div class="t" style="left:94.00px;top:314.26px;font-size:10.5px;line-height:13px;color:#4a79b6;font-weight:bold;">?</div>
<div class="t" style="left:154.60px;top:313.26px;font-size:10.5px;line-height:13px;color:#262626;letter-spacing:0.043px;">Required Materials</div>
<div class="t" style="left:261.80px;top:313.26px;font-size:10.5px;line-height:13px;color:#262626;transform:scaleX(0.9472);transform-origin:0 0;">5 days</div>
<div class="t" style="left:31.75px;top:331.75px;font-size:9.8px;line-height:12px;color:#727272;transform:scaleX(0.8532);transform-origin:0 0;">12</div>
<svg class="b" style="left:82.30px;top:328.55px" width="16" height="16" viewBox="-8 -8 16 16"><g transform="rotate(50) scale(0.9)"><path d="M0 0.4V5.4" stroke="#9a9ea2" stroke-width="0.95" fill="none"/><path d="M-2.5 -5.6h5a.6 .6 0 0 1 .6 .6v.8a.6 .6 0 0 1-.6 .6h-.8l.5 2.6h.7a.7 .7 0 0 1 .7 .7v.6a.6 .6 0 0 1-.6 .6h-6a.6 .6 0 0 1-.6-.6v-.6a.7 .7 0 0 1 .7-.7h.7l.5-2.6h-.8a.6 .6 0 0 1-.6-.6v-.8a.6 .6 0 0 1 .6-.6z" fill="#45c9ca"/></g></svg>
<div class="t" style="left:94.00px;top:332.41px;font-size:10.5px;line-height:13px;color:#4a79b6;font-weight:bold;">?</div>
<div class="t" style="left:154.60px;top:331.41px;font-size:10.5px;line-height:13px;color:#262626;letter-spacing:0.044px;">Required Methods</div>
<div class="t" style="left:261.80px;top:331.41px;font-size:10.5px;line-height:13px;color:#262626;transform:scaleX(0.9472);transform-origin:0 0;">4 days</div>
<div class="t" style="left:31.75px;top:349.90px;font-size:9.8px;line-height:12px;color:#727272;transform:scaleX(0.8532);transform-origin:0 0;">13</div>
<svg class="b" style="left:82.30px;top:346.70px" width="16" height="16" viewBox="-8 -8 16 16"><g transform="rotate(50) scale(0.9)"><path d="M0 0.4V5.4" stroke="#9a9ea2" stroke-width="0.95" fill="none"/><path d="M-2.5 -5.6h5a.6 .6 0 0 1 .6 .6v.8a.6 .6 0 0 1-.6 .6h-.8l.5 2.6h.7a.7 .7 0 0 1 .7 .7v.6a.6 .6 0 0 1-.6 .6h-6a.6 .6 0 0 1-.6-.6v-.6a.7 .7 0 0 1 .7-.7h.7l.5-2.6h-.8a.6 .6 0 0 1-.6-.6v-.8a.6 .6 0 0 1 .6-.6z" fill="#45c9ca"/></g></svg>
<div class="t" style="left:94.00px;top:350.56px;font-size:10.5px;line-height:13px;color:#4a79b6;font-weight:bold;">?</div>
<div class="t" style="left:144.40px;top:349.56px;font-size:10.5px;line-height:13px;color:#262626;font-weight:bold;transform:scaleX(0.9596);transform-origin:0 0;">Budget</div>
<svg class="b" style="left:135.70px;top:354.00px" width="4" height="4" viewBox="0 0 4 4"><path d="M3.8 0v3.8H0z" fill="#3c3c3c"/></svg>
<div class="t" style="left:31.75px;top:368.05px;font-size:9.8px;line-height:12px;color:#727272;transform:scaleX(0.8532);transform-origin:0 0;">14</div>
<svg class="b" style="left:82.30px;top:364.85px" width="16" height="16" viewBox="-8 -8 16 16"><g transform="rotate(50) scale(0.9)"><path d="M0 0.4V5.4" stroke="#9a9ea2" stroke-width="0.95" fill="none"/><path d="M-2.5 -5.6h5a.6 .6 0 0 1 .6 .6v.8a.6 .6 0 0 1-.6 .6h-.8l.5 2.6h.7a.7 .7 0 0 1 .7 .7v.6a.6 .6 0 0 1-.6 .6h-6a.6 .6 0 0 1-.6-.6v-.6a.7 .7 0 0 1 .7-.7h.7l.5-2.6h-.8a.6 .6 0 0 1-.6-.6v-.8a.6 .6 0 0 1 .6-.6z" fill="#45c9ca"/></g></svg>
<div class="t" style="left:94.00px;top:368.71px;font-size:10.5px;line-height:13px;color:#4a79b6;font-weight:bold;">?</div>
<div class="t" style="left:154.60px;top:367.71px;font-size:10.5px;line-height:13px;color:#262626;letter-spacing:0.057px;">Work with Sponsors</div>
<div class="t" style="left:261.80px;top:367.71px;font-size:10.5px;line-height:13px;color:#262626;transform:scaleX(0.9613);transform-origin:0 0;">11 days</div>
<div class="t" style="left:31.75px;top:386.20px;font-size:9.8px;line-height:12px;color:#727272;transform:scaleX(0.8532);transform-origin:0 0;">15</div>
<svg class="b" style="left:82.30px;top:383.00px" width="16" height="16" viewBox="-8 -8 16 16"><g transform="rotate(50) scale(0.9)"><path d="M0 0.4V5.4" stroke="#9a9ea2" stroke-width="0.95" fill="none"/><path d="M-2.5 -5.6h5a.6 .6 0 0 1 .6 .6v.8a.6 .6 0 0 1-.6 .6h-.8l.5 2.6h.7a.7 .7 0 0 1 .7 .7v.6a.6 .6 0 0 1-.6 .6h-6a.6 .6 0 0 1-.6-.6v-.6a.7 .7 0 0 1 .7-.7h.7l.5-2.6h-.8a.6 .6 0 0 1-.6-.6v-.8a.6 .6 0 0 1 .6-.6z" fill="#45c9ca"/></g></svg>
<div class="t" style="left:94.00px;top:386.86px;font-size:10.5px;line-height:13px;color:#4a79b6;font-weight:bold;">?</div>
<div class="t" style="left:154.60px;top:385.86px;font-size:10.5px;line-height:13px;color:#262626;letter-spacing:0.323px;">Work with</div>
<div class="t" style="left:154.60px;top:400.16px;font-size:10.5px;line-height:13px;color:#262626;letter-spacing:0.130px;">Contractors</div>
<div class="t" style="left:261.80px;top:385.86px;font-size:10.5px;line-height:13px;color:#262626;transform:scaleX(0.9613);transform-origin:0 0;">11 days</div>
<div class="t" style="left:31.75px;top:417.10px;font-size:9.8px;line-height:12px;color:#727272;transform:scaleX(0.8532);transform-origin:0 0;">16</div>
<svg class="b" style="left:82.30px;top:413.90px" width="16" height="16" viewBox="-8 -8 16 16"><g transform="rotate(50) scale(0.9)"><path d="M0 0.4V5.4" stroke="#9a9ea2" stroke-width="0.95" fill="none"/><path d="M-2.5 -5.6h5a.6 .6 0 0 1 .6 .6v.8a.6 .6 0 0 1-.6 .6h-.8l.5 2.6h.7a.7 .7 0 0 1 .7 .7v.6a.6 .6 0 0 1-.6 .6h-6a.6 .6 0 0 1-.6-.6v-.6a.7 .7 0 0 1 .7-.7h.7l.5-2.6h-.8a.6 .6 0 0 1-.6-.6v-.8a.6 .6 0 0 1 .6-.6z" fill="#45c9ca"/></g></svg>
<div class="t" style="left:94.00px;top:417.76px;font-size:10.5px;line-height:13px;color:#4a79b6;font-weight:bold;">?</div>
<div class="t" style="left:154.60px;top:416.76px;font-size:10.5px;line-height:13px;color:#262626;letter-spacing:0.109px;">Model Product Life</div>
<div class="t" style="left:154.60px;top:431.06px;font-size:10.5px;line-height:13px;color:#262626;transform:scaleX(0.9294);transform-origin:0 0;">Cycle</div>
<div class="t" style="left:261.80px;top:416.76px;font-size:10.5px;line-height:13px;color:#262626;transform:scaleX(0.9409);transform-origin:0 0;">14 days</div>
<div class="t" style="left:31.75px;top:448.50px;font-size:9.8px;line-height:12px;color:#727272;transform:scaleX(0.8532);transform-origin:0 0;">17</div>
<svg class="b" style="left:82.30px;top:445.30px" width="16" height="16" viewBox="-8 -8 16 16"><g transform="rotate(50) scale(0.9)"><path d="M0 0.4V5.4" stroke="#9a9ea2" stroke-width="0.95" fill="none"/><path d="M-2.5 -5.6h5a.6 .6 0 0 1 .6 .6v.8a.6 .6 0 0 1-.6 .6h-.8l.5 2.6h.7a.7 .7 0 0 1 .7 .7v.6a.6 .6 0 0 1-.6 .6h-6a.6 .6 0 0 1-.6-.6v-.6a.7 .7 0 0 1 .7-.7h.7l.5-2.6h-.8a.6 .6 0 0 1-.6-.6v-.8a.6 .6 0 0 1 .6-.6z" fill="#45c9ca"/></g></svg>
<div class="t" style="left:94.00px;top:449.16px;font-size:10.5px;line-height:13px;color:#4a79b6;font-weight:bold;">?</div>
<div class="t" style="left:144.40px;top:448.16px;font-size:10.5px;line-height:13px;color:#262626;font-weight:bold;transform:scaleX(0.9451);transform-origin:0 0;">Pricing Strategy</div>
<svg class="b" style="left:136.20px;top:451.10px" width="4" height="7" viewBox="0 0 4 7"><path d="M0.5 0.7L3.3 3.4 0.5 6.1z" fill="#fff" stroke="#9a9a9a" stroke-width="0.7"/></svg>
<div class="t" style="left:261.80px;top:448.16px;font-size:10.5px;line-height:13px;color:#262626;font-weight:bold;transform:scaleX(0.9396);transform-origin:0 0;">20 days</div>
<div class="t" style="left:31.75px;top:466.65px;font-size:9.8px;line-height:12px;color:#727272;transform:scaleX(0.8532);transform-origin:0 0;">20</div>
<svg class="b" style="left:82.30px;top:463.45px" width="16" height="16" viewBox="-8 -8 16 16"><g transform="rotate(50) scale(0.9)"><path d="M0 0.4V5.4" stroke="#9a9ea2" stroke-width="0.95" fill="none"/><path d="M-2.5 -5.6h5a.6 .6 0 0 1 .6 .6v.8a.6 .6 0 0 1-.6 .6h-.8l.5 2.6h.7a.7 .7 0 0 1 .7 .7v.6a.6 .6 0 0 1-.6 .6h-6a.6 .6 0 0 1-.6-.6v-.6a.7 .7 0 0 1 .7-.7h.7l.5-2.6h-.8a.6 .6 0 0 1-.6-.6v-.8a.6 .6 0 0 1 .6-.6z" fill="#45c9ca"/></g></svg>
<div class="t" style="left:94.00px;top:467.31px;font-size:10.5px;line-height:13px;color:#4a79b6;font-weight:bold;">?</div>
<div class="t" style="left:144.40px;top:466.31px;font-size:10.5px;line-height:13px;color:#262626;font-weight:bold;letter-spacing:0.044px;">Marketing&amp;Promotion</div>
<div class="t" style="left:261.80px;top:466.31px;font-size:10.5px;line-height:13px;color:#262626;transform:scaleX(0.9409);transform-origin:0 0;">19 days</div>
<div class="t" style="left:31.75px;top:484.80px;font-size:9.8px;line-height:12px;color:#727272;transform:scaleX(0.8532);transform-origin:0 0;">21</div>
<svg class="b" style="left:82.30px;top:481.60px" width="16" height="16" viewBox="-8 -8 16 16"><g transform="rotate(50) scale(0.9)"><path d="M0 0.4V5.4" stroke="#9a9ea2" stroke-width="0.95" fill="none"/><path d="M-2.5 -5.6h5a.6 .6 0 0 1 .6 .6v.8a.6 .6 0 0 1-.6 .6h-.8l.5 2.6h.7a.7 .7 0 0 1 .7 .7v.6a.6 .6 0 0 1-.6 .6h-6a.6 .6 0 0 1-.6-.6v-.6a.7 .7 0 0 1 .7-.7h.7l.5-2.6h-.8a.6 .6 0 0 1-.6-.6v-.8a.6 .6 0 0 1 .6-.6z" fill="#45c9ca"/></g></svg>
<div class="t" style="left:94.00px;top:485.46px;font-size:10.5px;line-height:13px;color:#4a79b6;font-weight:bold;">?</div>
<div class="t" style="left:144.40px;top:484.46px;font-size:10.5px;line-height:13px;color:#262626;font-weight:bold;transform:scaleX(0.9452);transform-origin:0 0;">Sales &amp; Distribution</div>
<div class="t" style="left:144.40px;top:498.76px;font-size:10.5px;line-height:13px;color:#262626;font-weight:bold;transform:scaleX(0.9568);transform-origin:0 0;">Strategy</div>
<svg class="b" style="left:135.70px;top:488.90px" width="4" height="4" viewBox="0 0 4 4"><path d="M3.8 0v3.8H0z" fill="#3c3c3c"/></svg>
<div class="t" style="left:31.75px;top:516.00px;font-size:9.8px;line-height:12px;color:#727272;transform:scaleX(0.8532);transform-origin:0 0;">22</div>
<svg class="b" style="left:82.30px;top:512.80px" width="16" height="16" viewBox="-8 -8 16 16"><g transform="rotate(50) scale(0.9)"><path d="M0 0.4V5.4" stroke="#9a9ea2" stroke-width="0.95" fill="none"/><path d="M-2.5 -5.6h5a.6 .6 0 0 1 .6 .6v.8a.6 .6 0 0 1-.6 .6h-.8l.5 2.6h.7a.7 .7 0 0 1 .7 .7v.6a.6 .6 0 0 1-.6 .6h-6a.6 .6 0 0 1-.6-.6v-.6a.7 .7 0 0 1 .7-.7h.7l.5-2.6h-.8a.6 .6 0 0 1-.6-.6v-.8a.6 .6 0 0 1 .6-.6z" fill="#45c9ca"/></g></svg>
<div class="t" style="left:94.00px;top:516.66px;font-size:10.5px;line-height:13px;color:#4a79b6;font-weight:bold;">?</div>
<div class="t" style="left:154.60px;top:515.66px;font-size:10.5px;line-height:13px;color:#262626;transform:scaleX(0.9283);transform-origin:0 0;">Stage 1</div>
<div class="t" style="left:261.80px;top:515.66px;font-size:10.5px;line-height:13px;color:#262626;transform:scaleX(0.9472);transform-origin:0 0;">6 days</div>
<div class="t" style="left:31.75px;top:534.15px;font-size:9.8px;line-height:12px;color:#727272;transform:scaleX(0.8532);transform-origin:0 0;">23</div>
<svg class="b" style="left:82.30px;top:530.95px" width="16" height="16" viewBox="-8 -8 16 16"><g transform="rotate(50) scale(0.9)"><path d="M0 0.4V5.4" stroke="#9a9ea2" stroke-width="0.95" fill="none"/><path d="M-2.5 -5.6h5a.6 .6 0 0 1 .6 .6v.8a.6 .6 0 0 1-.6 .6h-.8l.5 2.6h.7a.7 .7 0 0 1 .7 .7v.6a.6 .6 0 0 1-.6 .6h-6a.6 .6 0 0 1-.6-.6v-.6a.7 .7 0 0 1 .7-.7h.7l.5-2.6h-.8a.6 .6 0 0 1-.6-.6v-.8a.6 .6 0 0 1 .6-.6z" fill="#45c9ca"/></g></svg>
<div class="t" style="left:94.00px;top:534.81px;font-size:10.5px;line-height:13px;color:#4a79b6;font-weight:bold;">?</div>
<div class="t" style="left:154.60px;top:533.81px;font-size:10.5px;line-height:13px;color:#262626;transform:scaleX(0.9283);transform-origin:0 0;">Stage 2</div>
<div class="t" style="left:261.80px;top:533.81px;font-size:10.5px;line-height:13px;color:#262626;transform:scaleX(0.9472);transform-origin:0 0;">5 days</div>
<div class="t" style="left:31.75px;top:552.30px;font-size:9.8px;line-height:12px;color:#727272;transform:scaleX(0.8532);transform-origin:0 0;">24</div>
<svg class="b" style="left:82.30px;top:549.10px" width="16" height="16" viewBox="-8 -8 16 16"><g transform="rotate(50) scale(0.9)"><path d="M0 0.4V5.4" stroke="#9a9ea2" stroke-width="0.95" fill="none"/><path d="M-2.5 -5.6h5a.6 .6 0 0 1 .6 .6v.8a.6 .6 0 0 1-.6 .6h-.8l.5 2.6h.7a.7 .7 0 0 1 .7 .7v.6a.6 .6 0 0 1-.6 .6h-6a.6 .6 0 0 1-.6-.6v-.6a.7 .7 0 0 1 .7-.7h.7l.5-2.6h-.8a.6 .6 0 0 1-.6-.6v-.8a.6 .6 0 0 1 .6-.6z" fill="#45c9ca"/></g></svg>
<div class="t" style="left:94.00px;top:552.96px;font-size:10.5px;line-height:13px;color:#4a79b6;font-weight:bold;">?</div>
<div class="t" style="left:154.60px;top:551.96px;font-size:10.5px;line-height:13px;color:#262626;transform:scaleX(0.9283);transform-origin:0 0;">Stage 3</div>
<div class="t" style="left:261.80px;top:551.96px;font-size:10.5px;line-height:13px;color:#262626;transform:scaleX(0.9472);transform-origin:0 0;">7 days</div>
<div class="t" style="left:31.75px;top:570.45px;font-size:9.8px;line-height:12px;color:#727272;transform:scaleX(0.8532);transform-origin:0 0;">25</div>
<svg class="b" style="left:82.30px;top:567.25px" width="16" height="16" viewBox="-8 -8 16 16"><g transform="rotate(50) scale(0.9)"><path d="M0 0.4V5.4" stroke="#9a9ea2" stroke-width="0.95" fill="none"/><path d="M-2.5 -5.6h5a.6 .6 0 0 1 .6 .6v.8a.6 .6 0 0 1-.6 .6h-.8l.5 2.6h.7a.7 .7 0 0 1 .7 .7v.6a.6 .6 0 0 1-.6 .6h-6a.6 .6 0 0 1-.6-.6v-.6a.7 .7 0 0 1 .7-.7h.7l.5-2.6h-.8a.6 .6 0 0 1-.6-.6v-.8a.6 .6 0 0 1 .6-.6z" fill="#45c9ca"/></g></svg>
<div class="t" style="left:94.00px;top:571.11px;font-size:10.5px;line-height:13px;color:#4a79b6;font-weight:bold;">?</div>
<div class="t" style="left:144.40px;top:570.11px;font-size:10.5px;line-height:13px;color:#262626;transform:scaleX(0.9423);transform-origin:0 0;">Release</div>
<div class="b" style="left:434.30px;top:100.30px;width:3.70px;height:510.00px;background:linear-gradient(90deg,#cdcdcd 0,#d4d4d4 55%,#f2f2f2 100%);"></div>
<div class="b" style="left:437.40px;top:129.30px;width:586.60px;height:481.00px;background:#fff;"></div>
<div class="b" style="left:485.89px;top:129.30px;width:32.41px;height:481.00px;background:#f8f8f8;"></div>
<div class="b" style="left:599.33px;top:129.30px;width:32.41px;height:481.00px;background:#f8f8f8;"></div>
<div class="b" style="left:712.78px;top:129.30px;width:32.41px;height:481.00px;background:#f8f8f8;"></div>
<div class="b" style="left:826.23px;top:129.30px;width:32.41px;height:481.00px;background:#f8f8f8;"></div>
<div class="b" style="left:939.68px;top:129.30px;width:32.41px;height:481.00px;background:#f8f8f8;"></div>
<div class="b" style="left:1053.13px;top:129.30px;width:32.41px;height:481.00px;background:#f8f8f8;"></div>
<div class="b" style="left:437.40px;top:100.30px;width:586.60px;height:29.00px;background:#e6e6e6;"></div>
<div class="b" style="left:437.40px;top:128.80px;width:586.60px;height:1.00px;background:#c4c4c4;"></div>
<div class="t" style="left:438.20px;top:103.33px;font-size:8px;line-height:10px;color:#707070;letter-spacing:-0.150px;">22</div>
<div class="b" style="left:517.80px;top:103.50px;width:1.00px;height:25.50px;background:#d3d3d3;"></div>
<div class="t" style="left:522.50px;top:103.33px;font-size:8px;line-height:10px;color:#707070;letter-spacing:0.241px;">11 Apr &#x27;22</div>
<div class="b" style="left:631.25px;top:103.50px;width:1.00px;height:25.50px;background:#d3d3d3;"></div>
<div class="t" style="left:635.95px;top:103.33px;font-size:8px;line-height:10px;color:#707070;letter-spacing:0.182px;">18 Apr &#x27;22</div>
<div class="b" style="left:744.70px;top:103.50px;width:1.00px;height:25.50px;background:#d3d3d3;"></div>
<div class="t" style="left:749.40px;top:103.33px;font-size:8px;line-height:10px;color:#707070;letter-spacing:0.182px;">25 Apr &#x27;22</div>
<div class="b" style="left:858.15px;top:103.50px;width:1.00px;height:25.50px;background:#d3d3d3;"></div>
<div class="t" style="left:862.85px;top:103.33px;font-size:8px;line-height:10px;color:#707070;letter-spacing:0.191px;">02 May &#x27;22</div>
<div class="b" style="left:971.60px;top:103.50px;width:1.00px;height:25.50px;background:#d3d3d3;"></div>
<div class="t" style="left:976.30px;top:103.33px;font-size:8px;line-height:10px;color:#707070;letter-spacing:0.191px;">09 May &#x27;22</div>
<div class="t" style="left:441.29px;top:116.03px;font-size:8px;line-height:10px;color:#707070;">W</div>
<div class="b" style="left:452.97px;top:117.00px;width:1.00px;height:12.00px;background:#dddddd;"></div>
<div class="t" style="left:458.83px;top:116.03px;font-size:8px;line-height:10px;color:#707070;">T</div>
<div class="b" style="left:469.18px;top:117.00px;width:1.00px;height:12.00px;background:#dddddd;"></div>
<div class="t" style="left:475.04px;top:116.03px;font-size:8px;line-height:10px;color:#707070;">F</div>
<div class="b" style="left:485.39px;top:117.00px;width:1.00px;height:12.00px;background:#dddddd;"></div>
<div class="t" style="left:491.02px;top:116.03px;font-size:8px;line-height:10px;color:#707070;">S</div>
<div class="b" style="left:501.59px;top:117.00px;width:1.00px;height:12.00px;background:#dddddd;"></div>
<div class="t" style="left:507.23px;top:116.03px;font-size:8px;line-height:10px;color:#707070;">S</div>
<div class="t" style="left:522.77px;top:116.03px;font-size:8px;line-height:10px;color:#707070;">M</div>
<div class="b" style="left:534.01px;top:117.00px;width:1.00px;height:12.00px;background:#dddddd;"></div>
<div class="t" style="left:539.87px;top:116.03px;font-size:8px;line-height:10px;color:#707070;">T</div>
<div class="b" style="left:550.21px;top:117.00px;width:1.00px;height:12.00px;background:#dddddd;"></div>
<div class="t" style="left:554.74px;top:116.03px;font-size:8px;line-height:10px;color:#707070;">W</div>
<div class="b" style="left:566.42px;top:117.00px;width:1.00px;height:12.00px;background:#dddddd;"></div>
<div class="t" style="left:572.28px;top:116.03px;font-size:8px;line-height:10px;color:#707070;">T</div>
<div class="b" style="left:582.63px;top:117.00px;width:1.00px;height:12.00px;background:#dddddd;"></div>
<div class="t" style="left:588.49px;top:116.03px;font-size:8px;line-height:10px;color:#707070;">F</div>
<div class="b" style="left:598.83px;top:117.00px;width:1.00px;height:12.00px;background:#dddddd;"></div>
<div class="t" style="left:604.47px;top:116.03px;font-size:8px;line-height:10px;color:#707070;">S</div>
<div class="b" style="left:615.04px;top:117.00px;width:1.00px;height:12.00px;background:#dddddd;"></div>
<div class="t" style="left:620.68px;top:116.03px;font-size:8px;line-height:10px;color:#707070;">S</div>
<div class="t" style="left:636.22px;top:116.03px;font-size:8px;line-height:10px;color:#707070;">M</div>
<div class="b" style="left:647.46px;top:117.00px;width:1.00px;height:12.00px;background:#dddddd;"></div>
<div class="t" style="left:653.32px;top:116.03px;font-size:8px;line-height:10px;color:#707070;">T</div>
<div class="b" style="left:663.66px;top:117.00px;width:1.00px;height:12.00px;background:#dddddd;"></div>
<div class="t" style="left:668.19px;top:116.03px;font-size:8px;line-height:10px;color:#707070;">W</div>
<div class="b" style="left:679.87px;top:117.00px;width:1.00px;height:12.00px;background:#dddddd;"></div>
<div class="t" style="left:685.73px;top:116.03px;font-size:8px;line-height:10px;color:#707070;">T</div>
<div class="b" style="left:696.08px;top:117.00px;width:1.00px;height:12.00px;background:#dddddd;"></div>
<div class="t" style="left:701.94px;top:116.03px;font-size:8px;line-height:10px;color:#707070;">F</div>
<div class="b" style="left:712.28px;top:117.00px;width:1.00px;height:12.00px;background:#dddddd;"></div>
<div class="t" style="left:717.92px;top:116.03px;font-size:8px;line-height:10px;color:#707070;">S</div>
<div class="b" style="left:728.49px;top:117.00px;width:1.00px;height:12.00px;background:#dddddd;"></div>
<div class="t" style="left:734.13px;top:116.03px;font-size:8px;line-height:10px;color:#707070;">S</div>
<div class="t" style="left:749.67px;top:116.03px;font-size:8px;line-height:10px;color:#707070;">M</div>
<div class="b" style="left:760.90px;top:117.00px;width:1.00px;height:12.00px;background:#dddddd;"></div>
<div class="t" style="left:766.76px;top:116.03px;font-size:8px;line-height:10px;color:#707070;">T</div>
<div class="b" style="left:777.11px;top:117.00px;width:1.00px;height:12.00px;background:#dddddd;"></div>
<div class="t" style="left:781.64px;top:116.03px;font-size:8px;line-height:10px;color:#707070;">W</div>
<div class="b" style="left:793.32px;top:117.00px;width:1.00px;height:12.00px;background:#dddddd;"></div>
<div class="t" style="left:799.18px;top:116.03px;font-size:8px;line-height:10px;color:#707070;">T</div>
<div class="b" style="left:809.53px;top:117.00px;width:1.00px;height:12.00px;background:#dddddd;"></div>
<div class="t" style="left:815.39px;top:116.03px;font-size:8px;line-height:10px;color:#707070;">F</div>
<div class="b" style="left:825.73px;top:117.00px;width:1.00px;height:12.00px;background:#dddddd;"></div>
<div class="t" style="left:831.37px;top:116.03px;font-size:8px;line-height:10px;color:#707070;">S</div>
<div class="b" style="left:841.94px;top:117.00px;width:1.00px;height:12.00px;background:#dddddd;"></div>
<div class="t" style="left:847.58px;top:116.03px;font-size:8px;line-height:10px;color:#707070;">S</div>
<div class="t" style="left:863.12px;top:116.03px;font-size:8px;line-height:10px;color:#707070;">M</div>
<div class="b" style="left:874.35px;top:117.00px;width:1.00px;height:12.00px;background:#dddddd;"></div>
<div class="t" style="left:880.21px;top:116.03px;font-size:8px;line-height:10px;color:#707070;">T</div>
<div class="b" style="left:890.56px;top:117.00px;width:1.00px;height:12.00px;background:#dddddd;"></div>
<div class="t" style="left:895.09px;top:116.03px;font-size:8px;line-height:10px;color:#707070;">W</div>
<div class="b" style="left:906.77px;top:117.00px;width:1.00px;height:12.00px;background:#dddddd;"></div>
<div class="t" style="left:912.63px;top:116.03px;font-size:8px;line-height:10px;color:#707070;">T</div>
<div class="b" style="left:922.97px;top:117.00px;width:1.00px;height:12.00px;background:#dddddd;"></div>
<div class="t" style="left:928.83px;top:116.03px;font-size:8px;line-height:10px;color:#707070;">F</div>
<div class="b" style="left:939.18px;top:117.00px;width:1.00px;height:12.00px;background:#dddddd;"></div>
<div class="t" style="left:944.82px;top:116.03px;font-size:8px;line-height:10px;color:#707070;">S</div>
<div class="b" style="left:955.39px;top:117.00px;width:1.00px;height:12.00px;background:#dddddd;"></div>
<div class="t" style="left:961.02px;top:116.03px;font-size:8px;line-height:10px;color:#707070;">S</div>
<div class="t" style="left:976.57px;top:116.03px;font-size:8px;line-height:10px;color:#707070;">M</div>
<div class="b" style="left:987.80px;top:117.00px;width:1.00px;height:12.00px;background:#dddddd;"></div>
<div class="t" style="left:993.66px;top:116.03px;font-size:8px;line-height:10px;color:#707070;">T</div>
<div class="b" style="left:1004.01px;top:117.00px;width:1.00px;height:12.00px;background:#dddddd;"></div>
<div class="t" style="left:1008.54px;top:116.03px;font-size:8px;line-height:10px;color:#707070;">W</div>
<div class="b" style="left:1020.22px;top:117.00px;width:1.00px;height:12.00px;background:#dddddd;"></div>
<div class="t" style="left:1026.08px;top:116.03px;font-size:8px;line-height:10px;color:#707070;">T</div>
<div class="b" style="left:452.90px;top:129.30px;width:1.00px;height:481.00px;background:#b4ccb4;"></div>
<div class="b" style="left:922.9px;top:131px;width:1px;height:479px;background:repeating-linear-gradient(180deg,#cacaca 0,#cacaca 1px,rgba(255,255,255,0) 1px,rgba(255,255,255,0) 2.64px)"></div>
<div class="b" style="left:453.20px;top:137.90px;width:178.80px;height:4.00px;background:linear-gradient(180deg,#4aabb3 0,#339fa7 40%,#2e969e 100%);"></div>
<div class="t" style="left:457.90px;top:128.44px;font-size:11px;line-height:14px;color:#0c0c0c;font-weight:bold;letter-spacing:-0.136px;">Market Research</div>
<div class="b" style="left:451.80px;top:153.35px;width:99.90px;height:6.60px;background:#70c7d1;border-left:1px solid #56b4c0;border-right:1.6px solid #3c9ca8;border-bottom:1px solid #62bcc7;"></div>
<div class="b" style="left:451.80px;top:171.50px;width:83.40px;height:6.60px;background:#70c7d1;border-left:1px solid #56b4c0;border-right:1.6px solid #3c9ca8;border-bottom:1px solid #62bcc7;"></div>
<div class="b" style="left:451.80px;top:189.65px;width:180.90px;height:6.60px;background:#70c7d1;border-left:1px solid #56b4c0;border-right:1.6px solid #3c9ca8;border-bottom:1px solid #62bcc7;"></div>
<div class="b" style="left:567.20px;top:210.50px;width:226.70px;height:4.00px;background:linear-gradient(180deg,#4aabb3 0,#339fa7 40%,#2e969e 100%);"></div>
<div class="t" style="left:571.90px;top:201.04px;font-size:11px;line-height:14px;color:#0c0c0c;font-weight:bold;transform:scaleX(0.9593);transform-origin:0 0;">Product Concept</div>
<div class="b" style="left:567.20px;top:225.55px;width:96.50px;height:6.9px;background:linear-gradient(90deg,rgba(112,199,209,0) 0,#70c7d1 5px,#70c7d1 calc(100% - 5.5px),rgba(112,199,209,0) 100%);filter:blur(0.45px)"></div>
<div class="b" style="left:567.20px;top:243.70px;width:112.60px;height:6.9px;background:linear-gradient(90deg,rgba(112,199,209,0) 0,#70c7d1 5px,#70c7d1 calc(100% - 5.5px),rgba(112,199,209,0) 100%);filter:blur(0.45px)"></div>
<div class="b" style="left:567.20px;top:261.85px;width:129.20px;height:6.9px;background:linear-gradient(90deg,rgba(112,199,209,0) 0,#70c7d1 5px,#70c7d1 calc(100% - 5.5px),rgba(112,199,209,0) 100%);filter:blur(0.45px)"></div>
<div class="b" style="left:567.20px;top:280.00px;width:226.20px;height:6.9px;background:linear-gradient(90deg,rgba(112,199,209,0) 0,#70c7d1 5px,#70c7d1 calc(100% - 5.5px),rgba(112,199,209,0) 100%);filter:blur(0.45px)"></div>
<div class="b" style="left:453.20px;top:301.25px;width:114.00px;height:4.00px;background:linear-gradient(180deg,#4aabb3 0,#339fa7 40%,#2e969e 100%);"></div>
<div class="t" style="left:457.90px;top:291.79px;font-size:11px;line-height:14px;color:#0c0c0c;font-weight:bold;transform:scaleX(0.9498);transform-origin:0 0;">Features&amp;Functions</div>
<div class="b" style="left:455.00px;top:316.30px;width:110.20px;height:6.9px;background:linear-gradient(90deg,rgba(112,199,209,0) 0,#70c7d1 5px,#70c7d1 calc(100% - 5.5px),rgba(112,199,209,0) 100%);filter:blur(0.45px)"></div>
<div class="b" style="left:455.00px;top:334.45px;width:94.70px;height:6.9px;background:linear-gradient(90deg,rgba(112,199,209,0) 0,#70c7d1 5px,#70c7d1 calc(100% - 5.5px),rgba(112,199,209,0) 100%);filter:blur(0.45px)"></div>
<div class="b" style="left:453.20px;top:355.70px;width:323.80px;height:4.00px;background:linear-gradient(180deg,#4aabb3 0,#339fa7 40%,#2e969e 100%);"></div>
<div class="t" style="left:457.90px;top:346.24px;font-size:11px;line-height:14px;color:#0c0c0c;font-weight:bold;letter-spacing:-0.113px;">Budget</div>
<div class="b" style="left:455.00px;top:370.75px;width:241.20px;height:6.9px;background:linear-gradient(90deg,rgba(112,199,209,0) 0,#70c7d1 5px,#70c7d1 calc(100% - 5.5px),rgba(112,199,209,0) 100%);filter:blur(0.45px)"></div>
<div class="b" style="left:455.00px;top:388.90px;width:241.20px;height:6.9px;background:linear-gradient(90deg,rgba(112,199,209,0) 0,#70c7d1 5px,#70c7d1 calc(100% - 5.5px),rgba(112,199,209,0) 100%);filter:blur(0.45px)"></div>
<div class="b" style="left:455.00px;top:419.80px;width:322.20px;height:6.9px;background:linear-gradient(90deg,rgba(112,199,209,0) 0,#70c7d1 5px,#70c7d1 calc(100% - 5.5px),rgba(112,199,209,0) 100%);filter:blur(0.45px)"></div>
<div class="b" style="left:453.20px;top:451.40px;width:453.60px;height:4.00px;background:linear-gradient(90deg,#70c7d1 0,#70c7d1 calc(100% - 6px),rgba(112,199,209,0) calc(100% - 1px));"></div>
<div class="b" style="left:453.20px;top:454.30px;width:453.60px;height:4.00px;background:linear-gradient(180deg,#4aabb3 0,#339fa7 40%,#2e969e 100%);"></div>
<div class="t" style="left:457.90px;top:444.84px;font-size:11px;line-height:14px;color:#0c0c0c;font-weight:bold;letter-spacing:-0.072px;">Pricing Strategy</div>
<div class="b" style="left:455.00px;top:469.35px;width:435.20px;height:6.9px;background:linear-gradient(90deg,rgba(112,199,209,0) 0,#70c7d1 5px,#70c7d1 calc(100% - 5.5px),rgba(112,199,209,0) 100%);filter:blur(0.45px)"></div>
<div class="b" style="left:453.20px;top:490.60px;width:178.80px;height:4.00px;background:linear-gradient(180deg,#4aabb3 0,#339fa7 40%,#2e969e 100%);"></div>
<div class="t" style="left:457.90px;top:481.14px;font-size:11px;line-height:14px;color:#0c0c0c;font-weight:bold;letter-spacing:-0.006px;">Sales &amp; Distribution Strategy</div>
<div class="b" style="left:455.00px;top:518.70px;width:127.70px;height:6.9px;background:linear-gradient(90deg,rgba(112,199,209,0) 0,#70c7d1 5px,#70c7d1 calc(100% - 5.5px),rgba(112,199,209,0) 100%);filter:blur(0.45px)"></div>
<div class="b" style="left:455.00px;top:536.85px;width:111.40px;height:6.9px;background:linear-gradient(90deg,rgba(112,199,209,0) 0,#70c7d1 5px,#70c7d1 calc(100% - 5.5px),rgba(112,199,209,0) 100%);filter:blur(0.45px)"></div>
<div class="b" style="left:455.00px;top:555.00px;width:175.20px;height:6.9px;background:linear-gradient(90deg,rgba(112,199,209,0) 0,#70c7d1 5px,#70c7d1 calc(100% - 5.5px),rgba(112,199,209,0) 100%);filter:blur(0.45px)"></div>
<div class="b" style="left:1022.30px;top:100.30px;width:1.70px;height:510.00px;background:#cfcfcf;"></div>
<div class="b" style="left:1022.60px;top:101.60px;width:1.40px;height:12.40px;background:#6c6c6c;"></div>
<div class="b" style="left:347.60px;top:101.00px;width:46.90px;height:13.60px;background:#7daacb;"></div>
<div class="t" style="left:331.60px;top:101.46px;font-size:10.5px;line-height:13px;color:#3a7d3c;font-weight:bold;transform:scaleX(0.9132);transform-origin:0 0;">Predecessors</div>
<div class="b" style="left:276.40px;top:129.80px;width:158.40px;height:40.40px;background:#fff;border:1px solid #949494;border-right:1.6px solid #b2b2b2;"></div>
<div class="b" style="left:419.60px;top:130.80px;width:13.60px;height:37.20px;background:#f0f0f0;"></div>
<div class="b" style="left:277.40px;top:130.80px;width:142.20px;height:12.20px;background:#1b73cc;"></div>
<div class="t" style="left:278.40px;top:130.66px;font-size:10.5px;line-height:13px;color:#fff;transform:scaleX(0.8506);transform-origin:0 0;">Predecessors</div>
<div class="t" style="left:278.40px;top:143.56px;font-size:10.5px;line-height:13px;color:#1e1e1e;transform:scaleX(0.8791);transform-origin:0 0;">Preleveled Finish</div>
<div class="t" style="left:278.40px;top:156.86px;font-size:10.5px;line-height:13px;color:#1e1e1e;transform:scaleX(0.8956);transform-origin:0 0;">Preleveled Start</div>
<svg class="b" style="left:423.40px;top:134.20px" width="7" height="5.4" viewBox="0 0 7 5.4"><path d="M0.5 4.7L3.5 1.2l3 3.5" fill="none" stroke="#4a4a4a" stroke-width="1.25"/></svg>
<svg class="b" style="left:423.40px;top:159.60px" width="7" height="5.4" viewBox="0 0 7 5.4"><path d="M0.5 0.7L3.5 4.2l3-3.5" fill="none" stroke="#4a4a4a" stroke-width="1.25"/></svg>
<div class="b" style="left:257.90px;top:96.90px;width:180.10px;height:75.00px;border:3.2px solid #ff2a05;border-radius:2px;"></div>
<div class="b" style="left:21.50px;top:608.50px;width:1003.00px;height:1.50px;background:#dcdcdc;"></div>
<div class="b" style="left:21.50px;top:608.50px;width:334.00px;height:1.50px;background:#8a8a8a;"></div>
<div class="b" style="left:421.00px;top:608.50px;width:11.60px;height:1.50px;background:#8a8a8a;"></div>
<div class="b" style="left:439.00px;top:608.50px;width:12.00px;height:1.50px;background:#8a8a8a;"></div>
<div class="b" style="left:513.30px;top:608.50px;width:278.50px;height:1.50px;background:#8a8a8a;"></div>
</body></html>
